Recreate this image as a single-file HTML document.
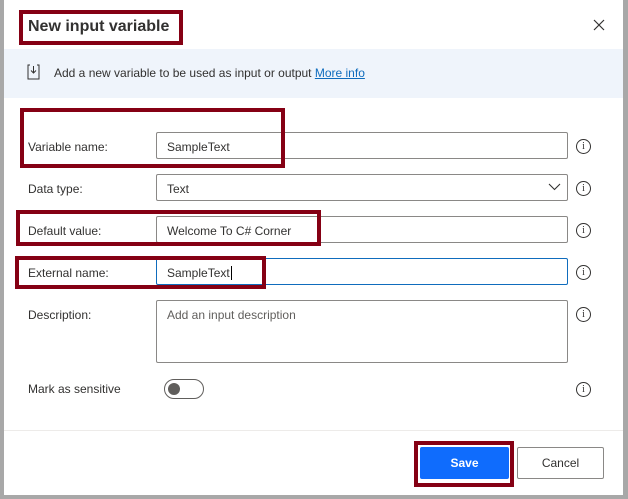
<!DOCTYPE html>
<html><head><meta charset="utf-8"><style>
*{box-sizing:border-box;margin:0;padding:0}
body{width:628px;height:499px;background:#a8a8a8;font-family:"Liberation Sans",sans-serif;position:relative;overflow:hidden;color:#323130}
.dlg{position:absolute;left:4px;top:0;width:619px;height:495px;background:#fff}
.a{position:absolute}
.red{position:absolute;border:4px solid #850014}
.lbl{position:absolute;left:28px;font-size:12px;color:#323130}
.in{position:absolute;left:156px;width:412px;height:27px;border:1px solid #8a8886;border-radius:2px;font-size:12px;padding:7px 10px;color:#323130}
.info{position:absolute;left:576px;width:15px;height:15px;border:1px solid #323130;border-radius:50%;font-size:10px;text-align:center;line-height:13px;font-family:"Liberation Serif",serif}
.btn{position:absolute;top:447px;height:32px;border-radius:2px;font-size:12px;font-weight:bold;text-align:center;line-height:32px}
</style></head><body>
<div class="dlg"></div>
<div class="a" style="left:28px;top:18px;font-size:16px;font-weight:bold;color:#323130">New input variable</div>
<div class="red" style="left:19px;top:10px;width:164px;height:35px"></div>
<svg class="a" style="left:592px;top:18px" width="14" height="14"><path d="M2 2L12 12M12 2L2 12" stroke="#323130" stroke-width="1.2"/></svg>
<div class="a" style="left:4px;top:49px;width:619px;height:49px;background:#eff4fb"></div>
<svg class="a" style="left:27px;top:64px" width="14" height="16"><path d="M3 1H1V15H12V1H10M6.5 2V9M4 6.5L6.5 9L9 6.5" fill="none" stroke="#323130" stroke-width="1"/></svg>
<div class="a" style="left:54px;top:66px;font-size:12px">Add a new variable to be used as input or output <span style="color:#0f6cbd;text-decoration:underline">More info</span></div>

<div class="lbl" style="top:140px">Variable name:</div>
<div class="in" style="top:132px">SampleText</div>
<div class="info" style="top:139px">i</div>
<div class="red" style="left:20px;top:108px;width:265px;height:60px"></div>

<div class="lbl" style="top:182px">Data type:</div>
<div class="in" style="top:174px">Text</div>
<svg class="a" style="left:548px;top:183px" width="13" height="8"><path d="M1 1L6.5 6.5L12 1" fill="none" stroke="#323130" stroke-width="1.1"/></svg>
<div class="info" style="top:181px">i</div>

<div class="lbl" style="top:224px">Default value:</div>
<div class="in" style="top:216px">Welcome To C# Corner</div>
<div class="info" style="top:223px">i</div>
<div class="red" style="left:16px;top:210px;width:305px;height:36px"></div>

<div class="lbl" style="top:266px">External name:</div>
<div class="in" style="top:258px;border-color:#0f6cbd">SampleText<span style="border-left:1px solid #000;margin-left:1px"></span></div>
<div class="info" style="top:265px">i</div>
<div class="red" style="left:15px;top:256px;width:251px;height:33px"></div>

<div class="lbl" style="top:308px">Description:</div>
<div class="in" style="top:300px;height:63px;color:#605e5c">Add an input description</div>
<div class="info" style="top:307px">i</div>

<div class="lbl" style="top:382px">Mark as sensitive</div>
<div class="a" style="left:164px;top:379px;width:40px;height:20px;border:1px solid #605e5c;border-radius:10px"></div>
<div class="a" style="left:168px;top:383px;width:12px;height:12px;border-radius:50%;background:#605e5c"></div>
<div class="info" style="top:382px">i</div>

<div class="a" style="left:4px;top:430px;width:619px;height:1px;background:#edebe9"></div>
<div class="btn" style="left:420px;width:89px;background:#0f6cfd;color:#fff">Save</div>
<div class="red" style="left:414px;top:441px;width:100px;height:46px"></div>
<div class="btn" style="left:517px;width:87px;border:1px solid #8a8886;color:#323130;font-weight:normal;line-height:30px">Cancel</div>
</body></html>
